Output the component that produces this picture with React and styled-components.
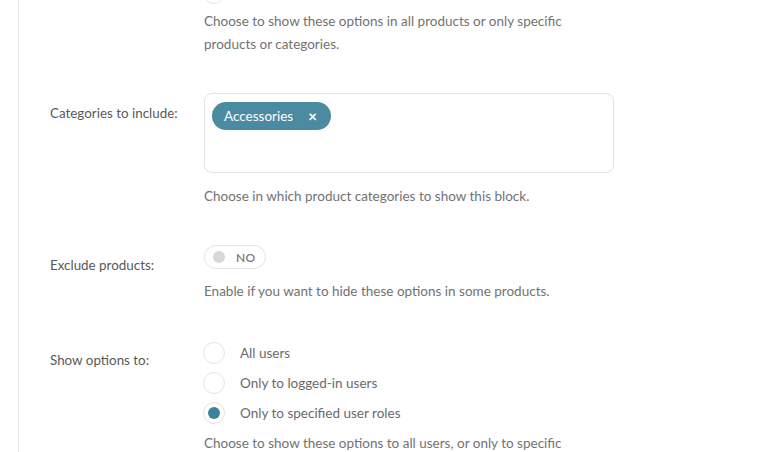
import React from "react";
import styled, { createGlobalStyle } from "styled-components";

const Global = createGlobalStyle`
  html, body { margin: 0; padding: 0; background: #fff; }
  body { font-family: Lato, "Open Sans", "Liberation Sans", sans-serif; overflow: hidden; }
`;

const Page = styled.div`
  margin-left: 18px;
  border-left: 1px solid #e9e9e9;
  min-height: 452px;
  padding-left: 31px;
  box-sizing: border-box;
`;

const Rows = styled.div`
  display: flex;
  flex-direction: column;
  gap: 37px;
`;

const Row = styled.div`
  display: grid;
  grid-template-columns: 154px 410px;
  align-items: start;
  margin-top: ${(p) => p.$offset || 0}px;
`;

const Label = styled.div`
  padding-top: 10px;
  font-size: 13.4px;
  line-height: 20px;
  color: #585858;
`;

const Field = styled.div`
  display: flex;
  flex-direction: column;
`;

const Desc = styled.p`
  margin: ${(p) => p.$gap ?? 11}px 0 0;
  font-size: 13.5px;
  line-height: 23px;
  color: #727272;
  max-width: 370px;
`;

const RadioList = styled.div`
  display: flex;
  flex-direction: column;
  gap: 4px;
`;

const RadioRow = styled.label`
  display: flex;
  align-items: center;
  height: 26px;
  gap: 15px;
  margin-left: -1px;
  font-size: 13.5px;
  color: #6a6a6a;
  cursor: pointer;
`;

const Circle = styled.span`
  width: 22px;
  height: 22px;
  border-radius: 50%;
  border: 1px solid #e4e4e4;
  box-sizing: border-box;
  display: flex;
  align-items: center;
  justify-content: center;
  background: #fff;
  flex-shrink: 0;
  &::after {
    content: "";
    width: 12px;
    height: 12px;
    border-radius: 50%;
    background: ${(p) => (p.$checked ? "#3f809c" : "transparent")};
  }
`;

const TagBox = styled.div`
  width: 410px;
  height: 80px;
  box-sizing: border-box;
  border: 1px solid #e2e2e2;
  border-radius: 8px;
  padding: 8px 7px;
  display: flex;
  align-items: flex-start;
`;

const Tag = styled.span`
  display: inline-flex;
  align-items: center;
  height: 28px;
  padding: 0 14px 0 12px;
  border-radius: 14px;
  background: #4b8ba1;
  color: #fff;
  font-size: 13.5px;
  gap: 15px;
`;

const TagClose = styled.span`
  font-size: 15px;
  line-height: 1;
  font-weight: 700;
`;

const Toggle = styled.div`
  display: inline-flex;
  align-items: center;
  align-self: flex-start;
  height: 24px;
  width: 62px;
  box-sizing: border-box;
  border: 1px solid #e4e4e4;
  border-radius: 12px;
  padding-left: 8px;
  gap: 11px;
`;

const Knob = styled.span`
  width: 12px;
  height: 12px;
  border-radius: 50%;
  background: #d8d8d8;
`;

const ToggleText = styled.span`
  font-size: 12px;
  font-weight: 600;
  color: #7a7a7a;
  letter-spacing: 0.2px;
`;

function Radio({ checked, children }) {
  return (
    <RadioRow>
      <Circle $checked={checked} />
      {children && <span>{children}</span>}
    </RadioRow>
  );
}

export default function App() {
  return (
    <>
      <Global />
      <Page>
        <Rows>
          <Row $offset={-20}>
            <Label />
            <Field>
              <RadioList>
                <Radio />
              </RadioList>
              <Desc $gap={4}>
                Choose to show these options in all products or only specific products or categories.
              </Desc>
            </Field>
          </Row>
          <Row>
            <Label>Categories to include:</Label>
            <Field>
              <TagBox>
                <Tag>
                  Accessories <TagClose>×</TagClose>
                </Tag>
              </TagBox>
              <Desc $gap={12}>Choose in which product categories to show this block.</Desc>
            </Field>
          </Row>
          <Row>
            <Label>Exclude products:</Label>
            <Field>
              <Toggle>
                <Knob />
                <ToggleText>NO</ToggleText>
              </Toggle>
              <Desc $gap={11}>Enable if you want to hide these options in some products.</Desc>
            </Field>
          </Row>
          <Row>
            <Label>Show options to:</Label>
            <Field>
              <RadioList>
                <Radio>All users</Radio>
                <Radio>Only to logged-in users</Radio>
                <Radio checked>Only to specified user roles</Radio>
              </RadioList>
              <Desc $gap={6}>
                Choose to show these options to all users, or only to specific user roles.
              </Desc>
            </Field>
          </Row>
        </Rows>
      </Page>
    </>
  );
}
